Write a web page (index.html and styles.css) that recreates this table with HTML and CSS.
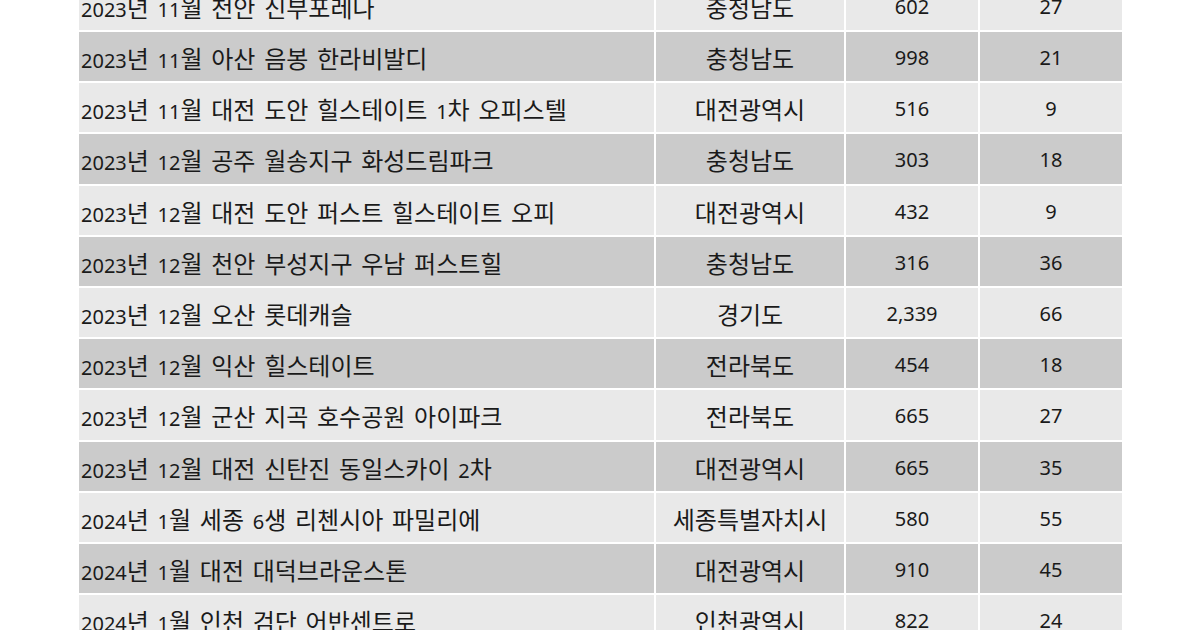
FILE: index.html
```html
<!DOCTYPE html>
<html lang="ko">
<head>
<meta charset="utf-8">
<link rel="stylesheet" href="styles.css">
</head>
<body>
<div class="sheet">
  <div class="row light"><div class="c name"><span class="n">2023</span>년 <span class="n">11</span>월 천안 신부포레나</div><div class="c">충청남도</div><div class="c num">602</div><div class="c num">27</div></div>
  <div class="row dark"><div class="c name"><span class="n">2023</span>년 <span class="n">11</span>월 아산 음봉 한라비발디</div><div class="c">충청남도</div><div class="c num">998</div><div class="c num">21</div></div>
  <div class="row light"><div class="c name"><span class="n">2023</span>년 <span class="n">11</span>월 대전 도안 힐스테이트 <span class="n">1</span>차 오피스텔</div><div class="c">대전광역시</div><div class="c num">516</div><div class="c num">9</div></div>
  <div class="row dark"><div class="c name"><span class="n">2023</span>년 <span class="n">12</span>월 공주 월송지구 화성드림파크</div><div class="c">충청남도</div><div class="c num">303</div><div class="c num">18</div></div>
  <div class="row light"><div class="c name"><span class="n">2023</span>년 <span class="n">12</span>월 대전 도안 퍼스트 힐스테이트 오피</div><div class="c">대전광역시</div><div class="c num">432</div><div class="c num">9</div></div>
  <div class="row dark"><div class="c name"><span class="n">2023</span>년 <span class="n">12</span>월 천안 부성지구 우남 퍼스트힐</div><div class="c">충청남도</div><div class="c num">316</div><div class="c num">36</div></div>
  <div class="row light"><div class="c name"><span class="n">2023</span>년 <span class="n">12</span>월 오산 롯데캐슬</div><div class="c">경기도</div><div class="c num">2,339</div><div class="c num">66</div></div>
  <div class="row dark"><div class="c name"><span class="n">2023</span>년 <span class="n">12</span>월 익산 힐스테이트</div><div class="c">전라북도</div><div class="c num">454</div><div class="c num">18</div></div>
  <div class="row light"><div class="c name"><span class="n">2023</span>년 <span class="n">12</span>월 군산 지곡 호수공원 아이파크</div><div class="c">전라북도</div><div class="c num">665</div><div class="c num">27</div></div>
  <div class="row dark"><div class="c name"><span class="n">2023</span>년 <span class="n">12</span>월 대전 신탄진 동일스카이 <span class="n">2</span>차</div><div class="c">대전광역시</div><div class="c num">665</div><div class="c num">35</div></div>
  <div class="row light"><div class="c name"><span class="n">2024</span>년 <span class="n">1</span>월 세종 <span class="n">6</span>생 리첸시아 파밀리에</div><div class="c">세종특별자치시</div><div class="c num">580</div><div class="c num">55</div></div>
  <div class="row dark"><div class="c name"><span class="n">2024</span>년 <span class="n">1</span>월 대전 대덕브라운스톤</div><div class="c">대전광역시</div><div class="c num">910</div><div class="c num">45</div></div>
  <div class="row light"><div class="c name"><span class="n">2024</span>년 <span class="n">1</span>월 인천 검단 어반센트로</div><div class="c">인천광역시</div><div class="c num">822</div><div class="c num">24</div></div>
</div>
</body>
</html>
```

FILE: styles.css
```css
html, body {
  margin: 0;
  padding: 0;
  background: #ffffff;
  overflow: hidden;
}
body {
  width: 1200px;
  height: 630px;
  font-family: "Noto Sans CJK KR", "Noto Sans", sans-serif;
  color: #1a1a1a;
}
.sheet {
  display: flex;
  flex-direction: column;
  row-gap: 2px;
  margin-top: -19.2px;
  margin-left: 79px;
  width: 1043px;
}
.row {
  display: grid;
  grid-template-columns: 575px 188px 132px 142px;
  column-gap: 2px;
  height: 49.2px;
}
.c {
  display: block;
  text-align: center;
  font-size: 24px;
  line-height: 51px;
  height: 49.2px;
  overflow: visible;
  white-space: nowrap;
}
.c.name {
  text-align: left;
  padding-left: 2px;
  word-spacing: 2px;
}
.c.num,
.n {
  font-family: "Noto Sans", "Open Sans", sans-serif;
  font-size: 20px;
}
.n {
  word-spacing: 0;
}
.light .c { background: #e9e9e9; }
.dark .c { background: #cbcbcb; }
```
